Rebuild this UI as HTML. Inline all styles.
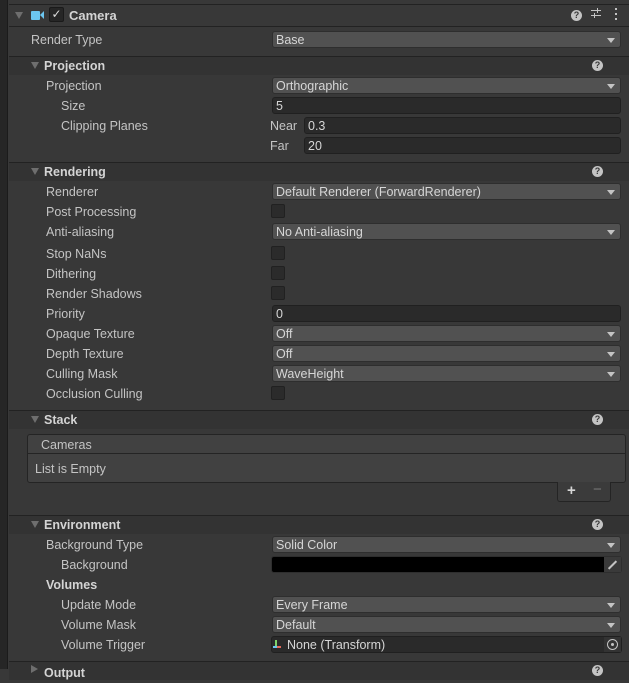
<!DOCTYPE html>
<html><head><style>
*{box-sizing:border-box;margin:0;padding:0}
body{width:629px;height:669px;overflow:hidden;background:#383838;font-family:"Liberation Sans",sans-serif;font-size:12.5px;color:#c4c4c4;position:relative}
.a{position:absolute}
.strip{left:0;top:0;width:8px;height:669px;background:#262626;border-right:1px solid #1b1b1b}
.line{left:9px;right:0;height:1px;background:#222}
.hdr{left:9px;right:0;height:18px;background:#333}
.ht{font-weight:bold;color:#d4d4d4;font-size:12.5px;line-height:19px}
.tri{width:0;height:0;border-left:4px solid transparent;border-right:4px solid transparent;border-top:7px solid #6e6e6e}
.lbl{line-height:20px;white-space:nowrap}
.dd{left:272px;width:349px;height:17px;background:#515151;border:1px solid #2e2e2e;border-radius:3px;line-height:16px;padding-left:3px;color:#d6d6d6}
.dd:after{content:"";position:absolute;right:5px;top:6px;border-left:4px solid transparent;border-right:4px solid transparent;border-top:5px solid #c4c4c4}
.tf{height:17px;background:#2a2a2a;border:1px solid #202020;border-radius:3px;line-height:16px;padding-left:3px;color:#d6d6d6}
.cb{left:271px;width:14px;height:14px;background:#2b2b2b;border:1px solid #212121;border-radius:2px}
.q{width:11px;height:11px;border-radius:50%;background:#c4c4c4;color:#383838;font-size:9px;font-weight:bold;text-align:center;line-height:11px}
</style></head><body>
<div class="a strip"></div>
<div class="a line" style="top:4px"></div>
<div class="a tri" style="left:15px;top:12px"></div>
<div class="a" style="left:31px;top:11px;width:9px;height:9px;background:#6cc6f0;border-radius:1px"></div>
<div class="a" style="left:40px;top:11px;width:0;height:0;border-top:4px solid transparent;border-bottom:4px solid transparent;border-right:4px solid #6cc6f0"></div>
<div class="a" style="left:49px;top:7px;width:15px;height:15px;background:#262626;border:1px solid #1a1a1a;border-radius:2px;color:#ddd;font-size:12px;text-align:center;line-height:13px">✓</div>
<div class="a ht" style="left:69px;top:6px;font-size:13px">Camera</div>
<div class="a q" style="left:571px;top:10px">?</div>
<div class="a" style="left:591px;top:10px;width:10px;height:1px;background:#c4c4c4"></div>
<div class="a" style="left:591px;top:15px;width:10px;height:1px;background:#c4c4c4"></div>
<div class="a" style="left:597px;top:8px;width:1px;height:5px;background:#c4c4c4"></div>
<div class="a" style="left:594px;top:13px;width:1px;height:5px;background:#c4c4c4"></div>
<div class="a" style="left:615px;top:8px;width:2px;height:2px;background:#c4c4c4"></div>
<div class="a" style="left:615px;top:13px;width:2px;height:2px;background:#c4c4c4"></div>
<div class="a" style="left:615px;top:18px;width:2px;height:2px;background:#c4c4c4"></div>
<div class="a line" style="top:26px"></div>
<div class="a lbl" style="left:31px;top:30px">Render Type</div>
<div class="a dd" style="top:31px">Base</div>

<div class="a line" style="top:56px"></div>
<div class="a hdr" style="top:57px"></div>
<div class="a tri" style="left:31px;top:62px"></div>
<div class="a ht" style="left:44px;top:57px">Projection</div>
<div class="a q" style="left:592px;top:60px">?</div>
<div class="a lbl" style="left:46px;top:76px">Projection</div><div class="a dd" style="top:77px">Orthographic</div>
<div class="a lbl" style="left:61px;top:96px">Size</div><div class="a tf" style="left:272px;width:349px;top:97px">5</div>
<div class="a lbl" style="left:61px;top:116px">Clipping Planes</div>
<div class="a lbl" style="left:270px;top:116px">Near</div><div class="a tf" style="left:304px;width:317px;top:117px">0.3</div>
<div class="a lbl" style="left:270px;top:136px">Far</div><div class="a tf" style="left:304px;width:317px;top:137px">20</div>

<div class="a line" style="top:162px"></div>
<div class="a hdr" style="top:163px"></div>
<div class="a tri" style="left:31px;top:168px"></div>
<div class="a ht" style="left:44px;top:163px">Rendering</div>
<div class="a q" style="left:592px;top:166px">?</div>
<div class="a lbl" style="left:46px;top:182px">Renderer</div><div class="a dd" style="top:183px">Default Renderer (ForwardRenderer)</div>
<div class="a lbl" style="left:46px;top:202px">Post Processing</div><div class="a cb" style="top:204px"></div>
<div class="a lbl" style="left:46px;top:222px">Anti-aliasing</div><div class="a dd" style="top:223px">No Anti-aliasing</div>
<div class="a lbl" style="left:46px;top:244px">Stop NaNs</div><div class="a cb" style="top:246px"></div>
<div class="a lbl" style="left:46px;top:264px">Dithering</div><div class="a cb" style="top:266px"></div>
<div class="a lbl" style="left:46px;top:284px">Render Shadows</div><div class="a cb" style="top:286px"></div>
<div class="a lbl" style="left:46px;top:304px">Priority</div><div class="a tf" style="left:272px;width:349px;top:305px">0</div>
<div class="a lbl" style="left:46px;top:324px">Opaque Texture</div><div class="a dd" style="top:325px">Off</div>
<div class="a lbl" style="left:46px;top:344px">Depth Texture</div><div class="a dd" style="top:345px">Off</div>
<div class="a lbl" style="left:46px;top:364px">Culling Mask</div><div class="a dd" style="top:365px">WaveHeight</div>
<div class="a lbl" style="left:46px;top:384px">Occlusion Culling</div><div class="a cb" style="top:386px"></div>

<div class="a line" style="top:410px"></div>
<div class="a hdr" style="top:411px"></div>
<div class="a tri" style="left:31px;top:416px"></div>
<div class="a ht" style="left:44px;top:411px">Stack</div>
<div class="a q" style="left:592px;top:414px">?</div>
<div class="a" style="left:27px;top:434px;width:599px;height:49px;background:#414141;border:1px solid #242424;border-radius:3px"></div>
<div class="a" style="left:28px;top:453px;width:597px;height:1px;background:#242424"></div>
<div class="a lbl" style="left:41px;top:435px">Cameras</div>
<div class="a lbl" style="left:35px;top:459px">List is Empty</div>
<div class="a" style="left:557px;top:482px;width:54px;height:20px;background:#3b3b3b;border:1px solid #242424;border-top:none;border-radius:0 0 3px 3px"></div>
<div class="a" style="left:567px;top:482px;color:#d6d6d6;font-size:15px;font-weight:bold">+</div>
<div class="a" style="left:593px;top:481px;color:#777;font-size:15px">−</div>

<div class="a line" style="top:515px"></div>
<div class="a hdr" style="top:516px"></div>
<div class="a tri" style="left:31px;top:521px"></div>
<div class="a ht" style="left:44px;top:516px">Environment</div>
<div class="a q" style="left:592px;top:519px">?</div>
<div class="a lbl" style="left:46px;top:535px">Background Type</div><div class="a dd" style="top:536px">Solid Color</div>
<div class="a lbl" style="left:61px;top:555px">Background</div>
<div class="a" style="left:271px;top:556px;width:351px;height:17px;background:#000;border:1px solid #2e2e2e;border-radius:3px"></div>
<div class="a" style="left:604px;top:557px;width:17px;height:15px;background:#3a3a3a"></div>
<div class="a" style="left:607px;top:564px;width:11px;height:2px;background:#c4c4c4;transform:rotate(-45deg)"></div>
<div class="a lbl" style="left:46px;top:575px;font-weight:bold;color:#d4d4d4">Volumes</div>
<div class="a lbl" style="left:61px;top:595px">Update Mode</div><div class="a dd" style="top:596px">Every Frame</div>
<div class="a lbl" style="left:61px;top:615px">Volume Mask</div><div class="a dd" style="top:616px">Default</div>
<div class="a lbl" style="left:61px;top:635px">Volume Trigger</div>
<div class="a tf" style="left:271px;width:351px;top:636px;padding-left:15px">None (Transform)</div>
<div class="a" style="left:275px;top:640px;width:2px;height:6px;background:#7fd36b"></div>
<div class="a" style="left:273px;top:646px;width:4px;height:2px;background:#6cc6f0"></div>
<div class="a" style="left:277px;top:646px;width:4px;height:2px;background:#e56b5b"></div>
<div class="a" style="left:604px;top:637px;width:17px;height:15px;background:#333"></div>
<div class="a" style="left:607px;top:639px;width:11px;height:11px;border:1px solid #c4c4c4;border-radius:50%"></div>
<div class="a" style="left:611px;top:643px;width:3px;height:3px;background:#c4c4c4;border-radius:50%"></div>
<div class="a line" style="top:661px"></div>
<div class="a hdr" style="top:662px"></div>
<div class="a" style="left:31px;top:665px;border-top:4px solid transparent;border-bottom:4px solid transparent;border-left:7px solid #6e6e6e"></div>
<div class="a ht" style="left:44px;top:664px">Output</div>
<div class="a q" style="left:592px;top:665px">?</div>
</body></html>
